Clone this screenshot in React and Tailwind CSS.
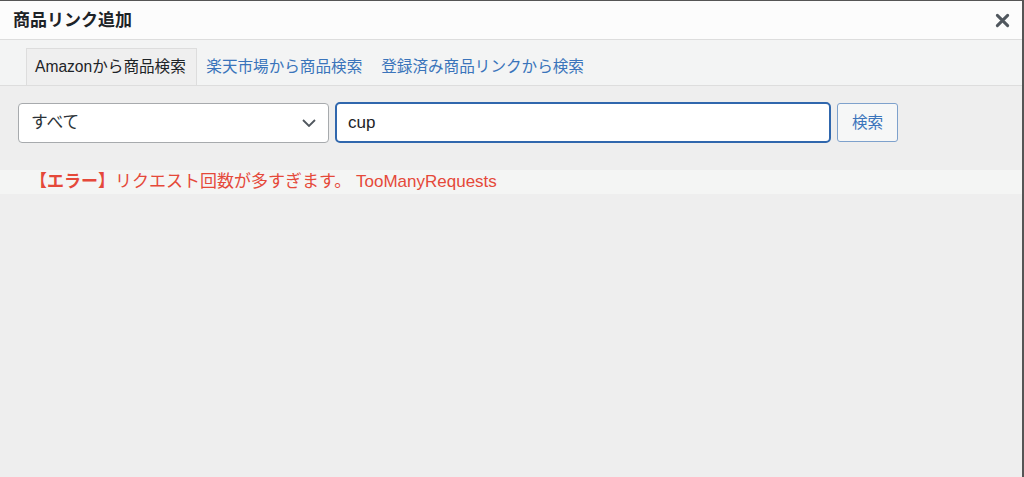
const font = { fontFamily: '"Liberation Sans", "Noto Sans CJK JP", sans-serif' };

const tabs = [
  { label: 'Amazonから商品検索', active: true },
  { label: '楽天市場から商品検索' },
  { label: '登録済み商品リンクから検索' },
];

export default function App() {
  return (
    <div
      className="w-[1024px] h-[477px] overflow-hidden flex flex-col bg-[#eeeeee] border-t border-r-2 border-[#555555]"
      style={font}
    >
      {/* header */}
      <div className="h-[39px] shrink-0 flex items-center justify-between pl-[13px] pr-[12px] bg-[#fcfcfc] border-b border-[#dddddd]">
        <h1 className="text-[17px] font-bold text-[#1d2327] leading-none">商品リンク追加</h1>
        <button className="w-[16px] h-[16px] flex items-center justify-center text-[#50575e]">
          <svg viewBox="0 0 16 16" className="w-[15px] h-[15px]">
            <path d="M2.5 2.5 L13.5 13.5 M13.5 2.5 L2.5 13.5" stroke="currentColor" strokeWidth="3.2" strokeLinecap="round" />
          </svg>
        </button>
      </div>

      {/* tabs */}
      <div className="h-[46px] shrink-0 flex items-end pl-[26px] bg-[#f3f4f4] border-b border-[#dddddd]">
        {tabs.map((tab) =>
          tab.active ? (
            <div
              key={tab.label}
              className="h-[37px] flex items-center pl-[8px] pr-[10px] bg-[#efefef] border border-b-0 border-[#dddddd] text-[15.6px] text-[#1d2327]"
            >
              {tab.label}
            </div>
          ) : (
            <a
              key={tab.label}
              href="#"
              className="h-[37px] flex items-center px-[9.5px] text-[15.6px] text-[#3a74bb]"
            >
              {tab.label}
            </a>
          )
        )}
      </div>

      {/* search row */}
      <div className="flex items-center gap-[6px] pl-[18px] pt-[16px]">
        <div className="w-[311px] h-[40px] flex items-center justify-between pl-[12px] pr-[12px] bg-white border border-[#a7aaad] rounded-[4px]">
          <span className="text-[16.7px] text-[#2c3338]">すべて</span>
          <svg viewBox="0 0 14 8" className="w-[14px] h-[8px] text-[#50575e]">
            <path d="M1 1 L7 7 L13 1" fill="none" stroke="currentColor" strokeWidth="1.8" />
          </svg>
        </div>
        <div className="w-[496px] h-[41px] flex items-center pl-[11px] bg-white border-2 border-[#3067ad] rounded-[5px]">
          <span className="text-[17px] text-[#1d2327]">cup</span>
        </div>
        <button className="w-[61px] h-[39px] flex items-center justify-center bg-[#f6f7f7] border border-[#7ea1cc] rounded-[3px] text-[15.6px] text-[#3a74bb]">
          検索
        </button>
      </div>

      {/* error */}
      <div className="mt-[27px] h-[24px] flex items-center pl-[30px] bg-[#f4f5f4] text-[17px] text-[#e5493a]">
        <span className="font-bold">【エラー】</span>
        <span>リクエスト回数が多すぎます。 TooManyRequests</span>
      </div>
    </div>
  );
}
